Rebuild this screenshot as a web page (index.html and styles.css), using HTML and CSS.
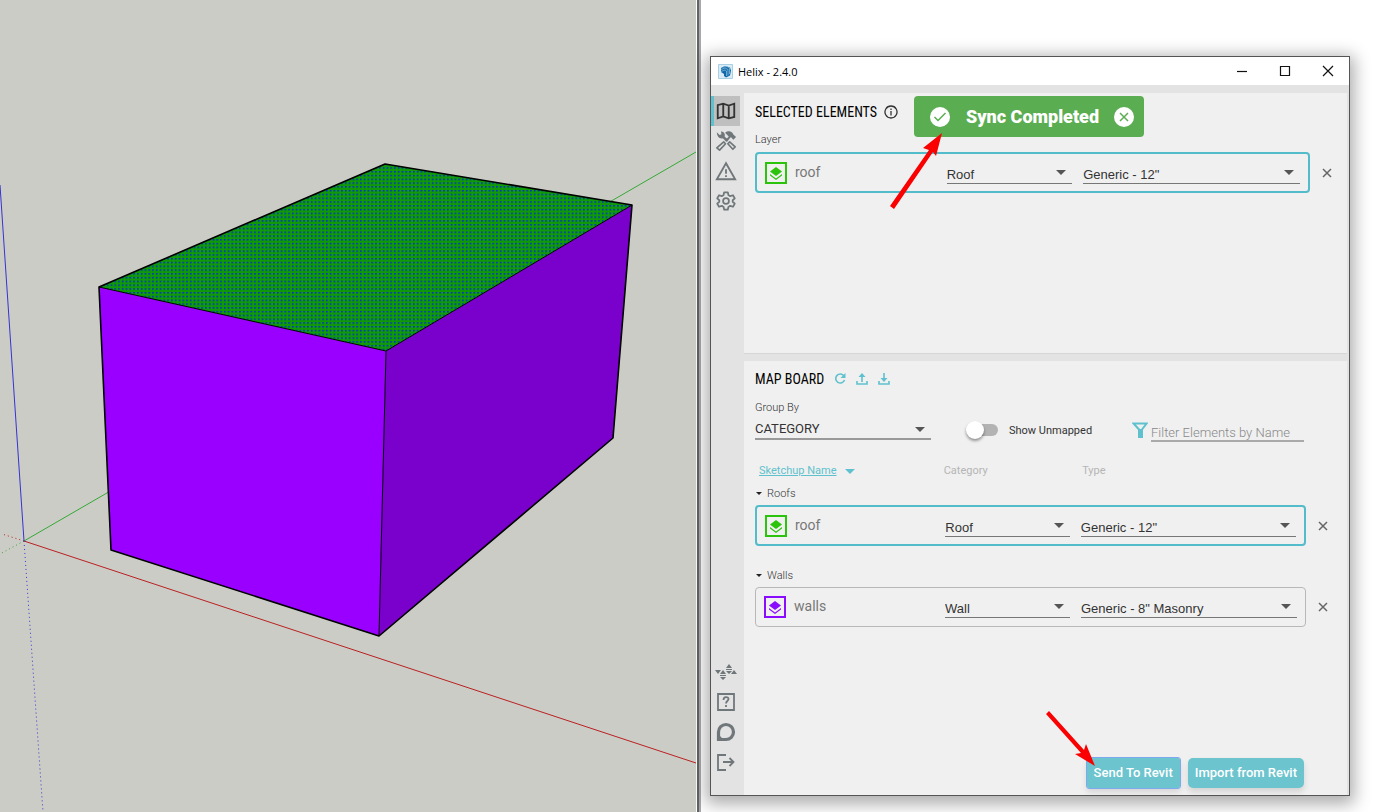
FILE: index.html
```
<!DOCTYPE html>
<html lang="en">
<head>
  <meta charset="UTF-8">
  <meta name="viewport" content="width=device-width, initial-scale=1.0">
  <title>Helix - 2.4.0</title>
  <link rel="stylesheet" href="styles.css">
</head>
<body>

  <!-- 3D model -->
  <main class="model">
    <svg viewBox="0 0 696 812" preserveAspectRatio="xMinYMid slice" role="img" aria-label="3D model">
      <defs>
        <pattern id="dots" width="3.78" height="3.78" patternUnits="userSpaceOnUse">
          <rect x="1" y="1" width="1.5" height="1.4" />
        </pattern>
      </defs>
      <path class="axis green" d="M24 541 696 152" />
      <path class="axis green dotted" d="M24 541 0 554" />
      <path class="axis red" d="M24 541 696 763" />
      <path class="axis red dotted" d="M24 541 2 534" />
      <path class="axis blue" d="M0 185 24 541" />
      <path class="axis blue dotted" d="M24 541 43 812" />
      <path class="face-left" d="M99 287 386 351 379 636 111 550z" />
      <path class="face-right" d="M386 351 632 205 613 438 379 636z" />
      <path class="face-top" d="M99 287 385 164 632 205 386 351z" />
      <path fill="url(#dots)" d="M99 287 385 164 632 205 386 351z" />
      <path class="edge" d="M99 287 386 351 632 205M386 351 379 636" />
      <path class="outline" d="M99 287 385 164 632 205 613 438 379 636 111 550z" />
    </svg>
  </main>

  <section class="side">
    <div class="window">
      <header class="titlebar">
        <svg class="logo" width="15" height="15" viewBox="0 0 15 15">
          <path fill="#d9ecf5" stroke="#a9cfe4" d="M.5.5h14v14H.5z" />
          <path fill="#1268a8" d="M3 4l4-2 5 1.500 1 3-1 5-4 2-2-1.500v-2l-3-2z" />
          <path fill="none" stroke="#8cc4e4" stroke-width=".7" d="M3 5.500l4-1.500 3 1.500v6M3 7.500l4-1.500 1.500 1v5M5 3l4-.5 2.500 1.500v6" />
        </svg>
        <span class="title">Helix - 2.4.0</span>
        <button class="win-btn" aria-label="Minimize"><svg width="12" height="12" viewBox="0 0 12 12"><path d="M1 6.500h10" /></svg></button>
        <button class="win-btn" aria-label="Maximize"><svg width="12" height="12" viewBox="0 0 12 12"><path d="M1.500 1.500h9v9h-9z" /></svg></button>
        <button class="win-btn" aria-label="Close"><svg width="12" height="12" viewBox="0 0 12 12"><path d="M1 1l10 10M11 1 1 11" /></svg></button>
      </header>

      <div class="content">
        <nav class="sidebar">
          <button class="nav-btn active" aria-label="Map">
            <svg width="22" height="22" viewBox="0 0 24 24"><path fill="none" stroke="#333" stroke-width="2" d="M3 5.500 9 4l6 2 6-2v14.500L15 20l-6-2-6 2zM9 4v14M15 6v14" /></svg>
          </button>
          <button class="nav-btn" aria-label="Tools">
            <svg width="22" height="22" viewBox="0 0 24 24">
              <path fill="none" stroke="currentColor" stroke-width="1.800" stroke-linejoin="round" d="M14 15l2-2 6 5.500-2.500 2.500zM9.500 13l2 2L5 22l-3-2.500z" />
              <path fill="currentColor" d="M2 2.500 5 5.500l2-1-.5-3c3 0 5 2.500 4 5.500l4 4-2 2-4-4C5 10 2 7 2 2.500zM11 3c3-2.500 6-2 8 0l1 2 3 2.500-3 3-2.500-2.500-1 .5-3 4-2-1.500 3.500-4z" />
            </svg>
          </button>
          <button class="nav-btn" aria-label="Warnings">
            <svg width="22" height="22" viewBox="0 0 24 24"><path fill="none" stroke="currentColor" stroke-width="2" d="M12 3.500 2 21h20zM12 10v5M12 16.500v2" /></svg>
          </button>
          <button class="nav-btn" aria-label="Settings">
            <svg width="22" height="22" viewBox="0 0 24 24"><g fill="none" stroke="currentColor" stroke-width="1.900" stroke-linejoin="round"><path d="M10 2.500h4l.6 3 2 1.200 3-1 2 3.500-2.300 2v1.600l2.300 2-2 3.500-3-1-2 1.200-.6 3h-4l-.6-3-2-1.200-3 1-2-3.500 2.300-2v-1.600l-2.300-2 2-3.500 3 1 2-1.200z" /><circle cx="12" cy="12" r="3.200" /></g></svg>
          </button>
          <div class="spacer"></div>
          <button class="nav-btn" aria-label="Levels">
            <svg width="24" height="18" viewBox="0 0 24 18"><path fill="currentColor" d="M1 7h6l-3 4zM6 11l3-4 3 4zM6 12h6v1H6zM6 14h6l-3 3zM12 5l3-4 3 4zM12 6h6v1h-6zM12 8h6l-3 3zM17 11l3-4 3 4z" /></svg>
          </button>
          <button class="nav-btn" aria-label="Help">
            <svg width="18" height="18" viewBox="0 0 18 18"><path fill="none" stroke="currentColor" stroke-width="1.800" d="M1 1h16v16H1zM6.500 7c0-4 5-3.500 5-1 0 2-2.500 2-2.500 4.500M9 12v2" /></svg>
          </button>
          <button class="nav-btn" aria-label="Chat">
            <svg width="20" height="20" viewBox="0 0 20 20"><path fill="none" stroke="currentColor" stroke-width="3.200" d="M2.500 17.500V10A7.500 7.500 0 1 1 10 17.500z" /><path fill="currentColor" d="M2 12l6 6H2z" /></svg>
          </button>
          <button class="nav-btn" aria-label="Log out">
            <svg width="18" height="18" viewBox="0 0 18 18"><path fill="none" stroke="currentColor" stroke-width="1.800" d="M9 2H1v15h8M1 1v17M6 9h10M12.500 5l4 4-4 4" /></svg>
          </button>
        </nav>

        <div class="panels">
          <section class="panel selected">
            <div class="heading">
              <h2>SELECTED ELEMENTS</h2>
              <svg width="14" height="14" viewBox="0 0 14 14"><path fill="none" stroke="#333" stroke-width="1.300" d="M7 1a6 6 0 1 0 .01 0zM7 6v4.500M7 3.500v1.500" /></svg>
            </div>
            <p class="label">Layer</p>
            <div class="row">
              <div class="card highlight">
                <div class="element green">
                  <svg width="22" height="22" viewBox="0 0 22 22"><path class="box" d="M1 1h20v20H1z" /><path class="layers" d="M11 5l6 4.500-6 4.500-6-4.500zM5 12l6 4.500 6-4.500v1.500L11 18l-6-4.500z" /></svg>
                  <span>roof</span>
                </div>
                <div class="select"><select aria-label="Category"><option>Roof</option></select></div>
                <div class="select"><select aria-label="Type"><option>Generic - 12"</option></select></div>
              </div>
              <button class="remove" aria-label="Remove roof"><svg width="10" height="10" viewBox="0 0 10 10"><path d="M1 1l8 8M9 1 1 9" /></svg></button>
            </div>
          </section>

          <section class="panel board">
            <div class="heading">
              <h2>MAP BOARD</h2>
              <button class="tool" aria-label="Refresh"><svg width="12" height="12" viewBox="0 0 12 12"><path d="M10 3A4.500 4.500 0 1 0 10.500 7" /><path class="solid" d="M11.500 0v5h-5z" /></svg></button>
              <button class="tool" aria-label="Upload"><svg width="12" height="12" viewBox="0 0 12 12"><path d="M1 8v3h10V8M6 9V3" /><path class="solid" d="M6 0l3.500 4h-7z" /></svg></button>
              <button class="tool" aria-label="Download"><svg width="12" height="12" viewBox="0 0 12 12"><path d="M1 8v3h10V8M6 0v6" /><path class="solid" d="M6 9 2.500 5h7z" /></svg></button>
            </div>

            <div class="filters">
              <div class="group">
                <label for="group-by">Group By</label>
                <div class="select"><select id="group-by"><option>CATEGORY</option></select></div>
              </div>
              <label class="toggle"><input type="checkbox"> Show Unmapped</label>
              <div class="search">
                <svg width="16" height="16" viewBox="0 0 16 16"><path fill="none" stroke="#5fc1cd" stroke-width="2" d="M1.500 1.500h13L10 7.500V15H7V7.500z" /><path fill="#5fc1cd" d="M6 7h4v9H6z" /></svg>
                <input type="text" placeholder="Filter Elements by Name" aria-label="Filter Elements by Name">
              </div>
            </div>

            <div class="columns">
              <a href="#" class="sort">Sketchup Name</a>
              <span>Category</span>
              <span>Type</span>
            </div>

            <h3>Roofs</h3>
            <div class="row">
              <div class="card highlight">
                <div class="element green">
                  <svg width="22" height="22" viewBox="0 0 22 22"><path class="box" d="M1 1h20v20H1z" /><path class="layers" d="M11 5l6 4.500-6 4.500-6-4.500zM5 12l6 4.500 6-4.500v1.500L11 18l-6-4.500z" /></svg>
                  <span>roof</span>
                </div>
                <div class="select"><select aria-label="Category"><option>Roof</option></select></div>
                <div class="select"><select aria-label="Type"><option>Generic - 12"</option></select></div>
              </div>
              <button class="remove" aria-label="Remove roof"><svg width="10" height="10" viewBox="0 0 10 10"><path d="M1 1l8 8M9 1 1 9" /></svg></button>
            </div>

            <h3>Walls</h3>
            <div class="row">
              <div class="card">
                <div class="element purple">
                  <svg width="22" height="22" viewBox="0 0 22 22"><path class="box" d="M1 1h20v20H1z" /><path class="layers" d="M11 5l6 4.500-6 4.500-6-4.500zM5 12l6 4.500 6-4.500v1.500L11 18l-6-4.500z" /></svg>
                  <span>walls</span>
                </div>
                <div class="select"><select aria-label="Category"><option>Wall</option></select></div>
                <div class="select"><select aria-label="Type"><option>Generic - 8" Masonry</option></select></div>
              </div>
              <button class="remove" aria-label="Remove walls"><svg width="10" height="10" viewBox="0 0 10 10"><path d="M1 1l8 8M9 1 1 9" /></svg></button>
            </div>

            <footer class="actions">
              <button class="action focused">Send To Revit
                <svg class="arrow arrow-send" width="52" height="56" viewBox="0 0 52 56"><path d="M0 3 3 0 38 39 40 33 49 55 29 43 35 42z" /></svg>
              </button>
              <button class="action">Import from Revit</button>
            </footer>
          </section>
        </div>
      </div>

      <div class="toast" role="status">
        <svg width="20" height="20" viewBox="0 0 20 20"><circle cx="10" cy="10" r="10" fill="#fff" /><path fill="none" stroke="#5aad50" stroke-width="1.500" d="M4.500 10l3.500 3.500L15.500 6" /></svg>
        <span>Sync Completed</span>
        <button aria-label="Dismiss"><svg width="20" height="20" viewBox="0 0 20 20"><circle cx="10" cy="10" r="10" fill="#fff" /><path fill="none" stroke="#5aad50" stroke-width="1.500" d="M6 6l8 8M14 6l-8 8" /></svg></button>
        <svg class="arrow arrow-toast" width="54" height="76" viewBox="0 0 54 76"><path d="M0 73 39 17 33 15 52 0 46 23 43 19 4 76z" /></svg>
      </div>
    </div>
  </section>

</body>
</html>
```
FILE: styles.css
```
* {
    box-sizing: border-box;
}

body {
    margin: 0;
    min-height: 100vh;
    display: grid;
    grid-template-columns: 696fr 684fr;
    font-family: Roboto, Arial, sans-serif;
    font-size: 11px;
    color: #333;
    background-color: #fff;
}

button {
    padding: 0;
    border: none;
    background: none;
    color: inherit;
    font-family: inherit;
}

svg {
    display: block;
    flex-shrink: 0;
}

/* Model */
.model {
    position: relative;
    overflow: hidden;
    background-color: #ccccc7;
}

.model svg {
    position: absolute;
    width: 100%;
    height: 100%;
}

#dots rect {
    fill: #0018ff;
}

.axis {
    fill: none;
    stroke-width: 1;
}

.axis.green {
    stroke: #35a835;
}

.axis.red {
    stroke: #b92020;
}

.axis.blue {
    stroke: #3434d0;
}

.axis.dotted {
    stroke-dasharray: 1 3;
}

.face-left {
    fill: #9900ff;
}

.face-right {
    fill: #7a00cc;
}

.face-top {
    fill: #0f9a06;
}

.edge,
.outline {
    fill: none;
    stroke: #000;
    stroke-width: 1;
    stroke-linejoin: round;
}

.outline {
    stroke-width: 1.6;
}

/* Helix window */
.side {
    display: flex;
    padding: 56px 30px 16px 14px;
    background: linear-gradient(to right, #fff 1px, #606464 1px, #606464 3px, #a8a8a8 3px, #a8a8a8 5px, #fff 5px);
    overflow: hidden;
}

.window {
    position: relative;
    flex: 1;
    display: flex;
    flex-direction: column;
    border: 1px solid #555;
    background-color: #e3e3e3;
    box-shadow: 0 4px 16px 4px rgba(0, 0, 0, 0.33);
}

.titlebar {
    display: flex;
    align-items: center;
    height: 28px;
    padding-left: 7px;
    background-color: #fff;
    color: #000;
    font-family: "Open Sans", sans-serif;
}

.title {
    flex: 1;
    margin-left: 5px;
}

.win-btn {
    display: flex;
    justify-content: center;
    width: 43px;
}

.win-btn path {
    fill: none;
    stroke: #111;
    stroke-width: 1.2;
}

.content {
    flex: 1;
    display: flex;
    padding-top: 8px;
}

/* Sidebar */
.sidebar {
    display: flex;
    flex-direction: column;
    width: 33px;
    padding: 3px 4px 18px 0;
    color: #70777a;
}

.nav-btn {
    display: flex;
    align-items: center;
    justify-content: center;
    height: 30px;
}

.nav-btn.active {
    border-left: 3px solid #5fc1cd;
    padding-right: 3px;
    background-color: #bfbfbf;
}

.spacer {
    flex: 1;
}

/* Panels */
.panels {
    flex: 1;
    display: flex;
    flex-direction: column;
    gap: 7px;
    padding-right: 2px;
}

.panel {
    display: flex;
    flex-direction: column;
    background-color: #f0f0f0;
}

.selected {
    height: 261px;
    padding: 0 3px 0 11px;
    border-bottom: 1px solid #d6d6d6;
}

.board {
    flex: 1;
    padding: 0 7px 7px 11px;
}

.heading {
    display: flex;
    align-items: center;
    gap: 10px;
    height: 36px;
}

.selected .heading {
    gap: 7px;
    height: 38px;
}

h2 {
    margin: 0;
    color: #000;
    font-family: "Roboto Condensed", "Liberation Sans Narrow", sans-serif;
    font-size: 14px;
    font-weight: 400;
}

.label {
    margin: 0;
    padding-bottom: 3px;
    line-height: 18px;
    font-weight: 300;
}

.tool path {
    fill: none;
    stroke: #5fc1cd;
    stroke-width: 1.6;
}

.tool .solid {
    fill: #5fc1cd;
    stroke: none;
}

/* Rows */
.row {
    display: flex;
}

.card {
    flex: 1;
    display: grid;
    grid-template-columns: 170fr 125fr 216fr;
    gap: 11px;
    height: 40px;
    padding: 8px;
    border: 1px solid #b8b8b8;
    border-radius: 4px;
}

.card.highlight {
    height: 41px;
    border: 2px solid #52bccb;
}

.element {
    display: flex;
    gap: 8px;
    color: #777;
    font-size: 14px;
    line-height: 20px;
}

.element .box {
    fill: none;
    stroke-width: 2;
}

.green .box {
    stroke: #2bc30b;
}

.green .layers {
    fill: #2bc30b;
}

.purple .box {
    stroke: #8a0cff;
}

.purple .layers {
    fill: #8a0cff;
}

.select {
    position: relative;
    border-bottom: 1px solid #777;
}

.select::after {
    content: "";
    position: absolute;
    top: 8px;
    right: 6px;
    border: 5px solid transparent;
    border-top-color: #555;
    border-bottom: none;
    pointer-events: none;
}

.card .select {
    height: 22px;
}

select {
    appearance: none;
    width: 100%;
    height: 100%;
    padding: 4px 0 0;
    border: none;
    background: none;
    color: #333;
    font-family: "Liberation Sans", Arial, sans-serif;
    font-size: 13px;
}

.remove {
    display: flex;
    align-items: center;
    justify-content: center;
    width: 34px;
}

.remove path {
    fill: none;
    stroke: #666;
    stroke-width: 1.5;
}

/* Filters */
.filters {
    display: grid;
    grid-template-columns: 176fr 131fr 172fr;
    column-gap: 35px;
    padding-right: 36px;
    height: 43px;
}

.group label {
    display: block;
    line-height: 22px;
    font-weight: 300;
}

.group .select {
    height: 21px;
    border-bottom: 2px solid #999;
}

.group select {
    padding: 0;
    font-family: inherit;
}

.toggle {
    display: flex;
    align-items: center;
    gap: 11px;
    padding-top: 23px;
    height: 43px;
    white-space: nowrap;
}

.toggle input {
    appearance: none;
    position: relative;
    width: 28px;
    height: 12px;
    margin: 0 0 0 4px;
    border-radius: 6px;
    background-color: #b3b3b3;
}

.toggle input::before {
    content: "";
    position: absolute;
    top: -3px;
    left: -4px;
    width: 18px;
    height: 18px;
    border-radius: 50%;
    background-color: #fff;
    box-shadow: 0 2px 3px rgba(0, 0, 0, 0.4);
}

.search {
    display: flex;
    gap: 3px;
    min-width: 0;
    padding-top: 25px;
}

.search input {
    flex: 1;
    min-width: 0;
    height: 20px;
    padding: 2px 0 0;
    border: none;
    border-bottom: 2px solid #aaa;
    background: none;
    font-family: inherit;
    font-size: 13px;
}

.search input::placeholder {
    color: #888;
    font-weight: 300;
}

.columns {
    display: grid;
    grid-template-columns: 184fr 138fr 223fr;
    padding: 0 34px 0 4px;
    margin-top: 20px;
    line-height: 22px;
    color: #b5b5b5;
}

.sort {
    color: #5fc1cd;
}

.sort::after {
    content: "";
    display: inline-block;
    margin-left: 8px;
    vertical-align: middle;
    border: 5px solid transparent;
    border-top-color: #5fc1cd;
    border-bottom: none;
}

h3 {
    margin: 0;
    line-height: 23px;
    font-size: 11px;
    font-weight: 300;
}

h3::before {
    content: "";
    display: inline-block;
    margin: 0 5px 2px 1px;
    vertical-align: middle;
    border: 3px solid transparent;
    border-top-color: #222;
    border-bottom: none;
}

.row + h3 {
    margin-top: 18px;
}

/* Buttons */
.actions {
    display: flex;
    justify-content: flex-end;
    gap: 8px;
    margin-top: auto;
    padding-right: 36px;
}

.action {
    position: relative;
    height: 30px;
    padding: 0 7px 2px;
    border-radius: 5px;
    background-color: #6bc4ce;
    color: #fff;
    font-size: 13px;
    font-weight: 500;
    box-shadow: 0 4px 6px rgba(0, 0, 0, 0.12);
}

.action.focused {
    border-radius: 2px;
    outline: 1px solid #7fa9ee;
}

/* Toast */
.toast {
    position: absolute;
    top: 39px;
    left: 203px;
    display: flex;
    align-items: center;
    width: 230px;
    height: 41px;
    padding: 0 10px 0 16px;
    border-radius: 4px;
    background-color: #5aad50;
    color: #fff;
    font-size: 18px;
    font-weight: 900;
}

.toast span {
    flex: 1;
    margin-left: 16px;
    white-space: nowrap;
}

/* Arrows */
.arrow {
    position: absolute;
    fill: #fa0000;
    pointer-events: none;
}

.arrow-toast {
    top: 37px;
    left: -24px;
}

.arrow-send {
    top: -47px;
    left: -41px;
}
```
